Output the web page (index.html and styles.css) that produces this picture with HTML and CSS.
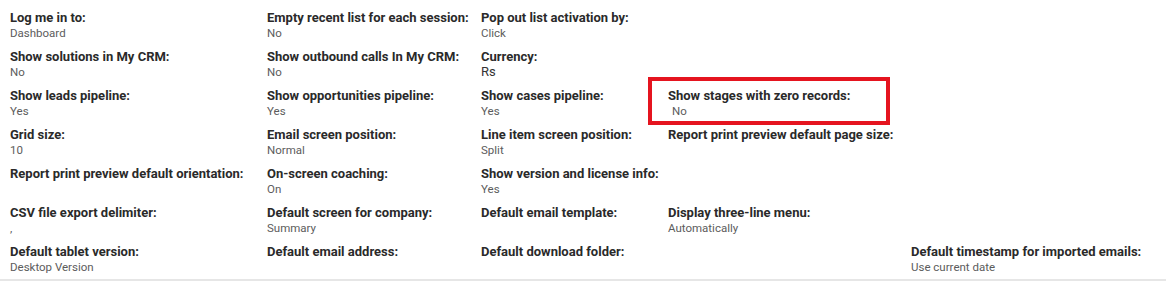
FILE: index.html
```html
<!DOCTYPE html>
<html>
<head>
<meta charset="utf-8">
<link rel="stylesheet" href="styles.css">
</head>
<body>
<div class="settings">
  <div class="field"><div class="label">Log me in to:</div><div class="value">Dashboard</div></div>
  <div class="field"><div class="label">Empty recent list for each session:</div><div class="value">No</div></div>
  <div class="field"><div class="label">Pop out list activation by:</div><div class="value">Click</div></div>
  <div class="field"></div>
  <div class="field"></div>

  <div class="field"><div class="label">Show solutions in My CRM:</div><div class="value">No</div></div>
  <div class="field"><div class="label">Show outbound calls In My CRM:</div><div class="value">No</div></div>
  <div class="field"><div class="label">Currency:</div><div class="value big">Rs</div></div>
  <div class="field"></div>
  <div class="field"></div>

  <div class="field"><div class="label">Show leads pipeline:</div><div class="value">Yes</div></div>
  <div class="field"><div class="label">Show opportunities pipeline:</div><div class="value">Yes</div></div>
  <div class="field"><div class="label">Show cases pipeline:</div><div class="value">Yes</div></div>
  <div class="field highlighted"><div class="label">Show stages with zero records:</div><div class="value indent">No</div></div>
  <div class="field"></div>

  <div class="field"><div class="label">Grid size:</div><div class="value">10</div></div>
  <div class="field"><div class="label">Email screen position:</div><div class="value">Normal</div></div>
  <div class="field"><div class="label">Line item screen position:</div><div class="value">Split</div></div>
  <div class="field"><div class="label">Report print preview default page size:</div><div class="value"></div></div>
  <div class="field"></div>

  <div class="field"><div class="label">Report print preview default orientation:</div><div class="value"></div></div>
  <div class="field"><div class="label">On-screen coaching:</div><div class="value">On</div></div>
  <div class="field"><div class="label">Show version and license info:</div><div class="value">Yes</div></div>
  <div class="field"></div>
  <div class="field"></div>

  <div class="field"><div class="label">CSV file export delimiter:</div><div class="value">,</div></div>
  <div class="field"><div class="label">Default screen for company:</div><div class="value">Summary</div></div>
  <div class="field"><div class="label">Default email template:</div><div class="value"></div></div>
  <div class="field"><div class="label">Display three-line menu:</div><div class="value">Automatically</div></div>
  <div class="field"></div>

  <div class="field"><div class="label">Default tablet version:</div><div class="value">Desktop Version</div></div>
  <div class="field"><div class="label">Default email address:</div><div class="value"></div></div>
  <div class="field"><div class="label">Default download folder:</div><div class="value"></div></div>
  <div class="field"></div>
  <div class="field"><div class="label">Default timestamp for imported emails:</div><div class="value">Use current date</div></div>
</div>
</body>
</html>
```
FILE: styles.css
```css
html, body {
  margin: 0;
  padding: 0;
  background: #ffffff;
}
body {
  font-family: Roboto, "Liberation Sans", Arial, sans-serif;
  width: 1166px;
  height: 282px;
  overflow: hidden;
}
.settings {
  display: grid;
  grid-template-columns: 257px 214px 187px 243px 1fr;
  grid-auto-rows: 39px;
  padding: 10px 0 0 10px;
  border-bottom: 2px solid #e6e6e6;
  box-sizing: border-box;
  height: 281px;
}
.field {
  position: relative;
}
.label {
  font-size: 13px;
  font-weight: 700;
  color: #2a2a2a;
  line-height: 15px;
  white-space: nowrap;
}
.value {
  font-size: 11.5px;
  color: #5c5c5c;
  line-height: 14px;
  min-height: 14px;
  margin-top: 1px;
  white-space: nowrap;
}
.value.big {
  font-size: 13px;
  color: #333333;
}
.value.indent {
  padding-left: 4px;
}
.highlighted::after {
  content: "";
  position: absolute;
  left: -20px;
  top: -11px;
  width: 242px;
  height: 48px;
  border: 4px solid #e5141f;
  box-sizing: border-box;
}
```
